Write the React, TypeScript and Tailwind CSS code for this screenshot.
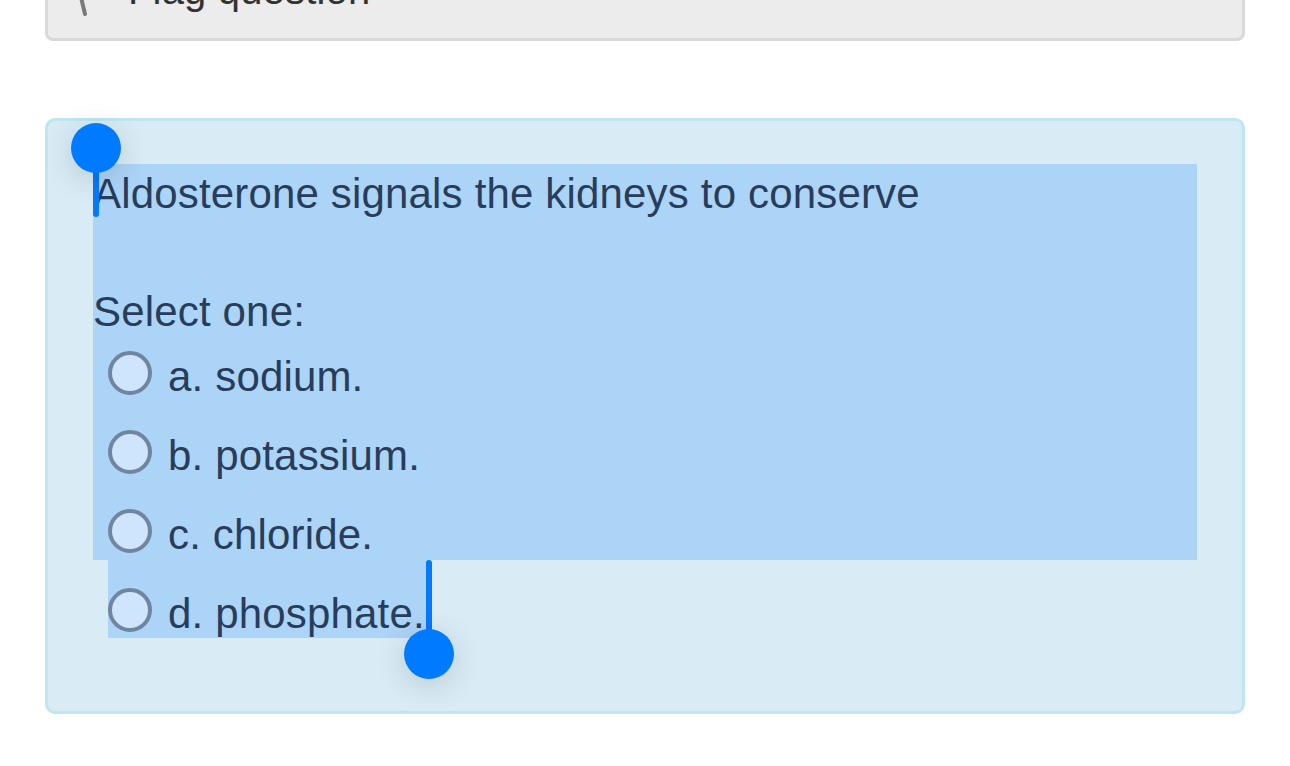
const font = { fontFamily: '"Liberation Sans", Arial, sans-serif' };

function Radio() {
    return (
        <span className="mt-[28px] box-border h-[44px] w-[44px] shrink-0 rounded-full border-[4px] border-[#70859f] bg-[#cfe4fd]" />
    );
}

function Option({ label }: { label: string }) {
    return (
        <div className="flex h-[79px] items-start gap-[16px] pl-[15px]">
            <Radio />
            <span className="mt-[30px] leading-[48px]">{label}</span>
        </div>
    );
}

function Handle({ className }: { className: string }) {
    return (
        <div className={`absolute h-[50px] w-[50px] rounded-full bg-[#007aff] shadow-[0_6px_30px_rgba(0,0,0,0.16)] ${className}`} />
    );
}

export default function App() {
    return (
        <div className="relative min-h-[766px] overflow-hidden bg-white px-[45px]" style={font}>
            {/* flag question bar, mostly scrolled off the top */}
            <div className="-mt-[43px] h-[84px] rounded-[8px] border-[3px] border-t-0 border-[#d9d9d9] bg-[#ececec]">
                <div className="flex items-start pt-[13px] text-[40px] leading-[40px] text-[#333]">
                    <svg className="ml-[28px] mt-[15px] h-[32px] w-[20px] shrink-0" viewBox="0 0 20 32">
                        <line x1="2" y1="0" x2="9" y2="29" stroke="#7a7a7a" strokeWidth="4" strokeLinecap="round" />
                    </svg>
                    <span className="ml-[32px] tracking-[0.17px]">Flag question</span>
                </div>
            </div>

            {/* question card */}
            <div className="mt-[77px] h-[596px] rounded-[10px] border-[3px] border-[#bde6f1] bg-[#d9ecf5] px-[45px] pt-[43px] text-[42px] tracking-[0.17px] text-[#283d5b]">
                <div className="bg-[#acd4f7]">
                    <p className="leading-[59px]">Aldosterone signals the kidneys to conserve</p>
                    <p className="mt-[65px] leading-[48px]">Select one:</p>
                    <div className="-mt-[13px]">
                        <Option label="a. sodium." />
                        <Option label="b. potassium." />
                        <Option label="c. chloride." />
                    </div>
                </div>
                <div className="ml-[15px] flex h-[78px] w-fit items-start gap-[16px] bg-[#acd4f7] pr-[3px]">
                    <Radio />
                    <span className="mt-[30px] leading-[48px]">d. phosphate.</span>
                </div>
            </div>

            {/* selection handles */}
            <div className="absolute left-[93px] top-[150px] h-[67px] w-[6px] rounded-full bg-[#007aff]" />
            <Handle className="left-[71px] top-[123px]" />
            <div className="absolute left-[426px] top-[560px] h-[90px] w-[6px] rounded-full bg-[#007aff]" />
            <Handle className="left-[404px] top-[629px]" />
        </div>
    );
}
